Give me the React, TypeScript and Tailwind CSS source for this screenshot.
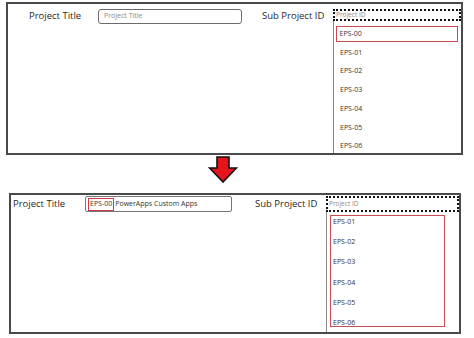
const topItems = ['EPS-00', 'EPS-01', 'EPS-02', 'EPS-03', 'EPS-04', 'EPS-05', 'EPS-06'];
const bottomItems = ['EPS-01', 'EPS-02', 'EPS-03', 'EPS-04', 'EPS-05', 'EPS-06'];

const font = { fontFamily: '"Open Sans", "Noto Sans", sans-serif' };

const Arrow = () => (
  <svg width="30" height="27" viewBox="0 0 30 27">
    <polygon
      points="9,1 21,1 21,12 28.5,12 15,26 1.5,12 9,12"
      fill="#e3141b"
      stroke="#111"
      strokeWidth="1.6"
      strokeLinejoin="miter"
    />
  </svg>
);

export default function App() {
  return (
    <div className="w-[474px] h-[338px] bg-white text-[#1f1f1f] overflow-hidden" style={font}>
      {/* before */}
      <div className="mt-[2px] ml-[6px] w-[457px] h-[153px] border-2 border-[#4a4a4a] flex items-start pl-[21px] pt-[5px]">
        <div className="w-[69px] h-[15px] flex items-center text-[9.5px]">Project Title</div>
        <div className="w-[144px] h-[15px] border border-[#6b6b6b] rounded-[3px] flex items-center pl-[5px] text-[7px] text-[#8a8a8a]">
          Project Title
        </div>
        <div className="ml-[20px] w-[71px] h-[15px] flex items-center text-[9.5px]">Sub Project ID</div>
        <div className="w-[128px] self-stretch flex flex-col">
          <div className="h-[12px] border-2 border-dotted border-[#111] flex items-center pl-[1px] text-[6.5px] leading-none text-[#8a8a8a]">
            Project ID
          </div>
          <div className="flex-1 border-l border-[#8a8a8a] pt-[4px] overflow-hidden">
            {topItems.map((item, i) =>
              i === 0 ? (
                <div key={item} className="h-[18.7px] flex items-center pl-[2px] pr-[3px]">
                  <div className="w-full h-[16px] border-[1.5px] border-[#c94a52] flex items-center pl-[2.5px] text-[7px] text-[#333]">
                    {item}
                  </div>
                </div>
              ) : (
                <div key={item} className="h-[18.7px] flex items-center pl-[6px] text-[7px] text-[#333]">
                  {item}
                </div>
              )
            )}
          </div>
        </div>
      </div>

      {/* arrow */}
      <div className="h-[38px] pl-[208px] pt-[1px]">
        <Arrow />
      </div>

      {/* after */}
      <div className="ml-[9px] w-[452px] h-[141px] border-2 border-[#4a4a4a] flex items-start pl-[2px] pt-[1px]">
        <div className="w-[72px] h-[16px] flex items-center text-[9.5px]">Project Title</div>
        <div className="w-[147px] h-[16px] border border-[#777] rounded-[2px] flex items-center pl-[2px] text-[7px] text-[#333]">
          <span className="h-[13px] px-[1px] border border-[#d03a44] flex items-center">EPS-00</span>
          <span className="ml-[1px]">PowerApps Custom Apps</span>
        </div>
        <div className="ml-[23px] w-[71px] h-[16px] flex items-center text-[9.5px]">Sub Project ID</div>
        <div className="w-[133px] self-stretch flex flex-col">
          <div className="h-[16px] border-2 border-dotted border-[#111] flex items-center pl-[1px] text-[6.5px] leading-none text-[#8a8a8a]">
            Project ID
          </div>
          <div className="flex-1 border-l border-[#8a8a8a] pl-[3px] pt-[3px]">
            <div className="w-[115px] h-[112px] border-[1.5px] border-[#c94a52] overflow-hidden pl-[2px]">
              {bottomItems.map((item) => (
                <div key={item} className="h-[20.2px] leading-[12px] text-[7px] text-[#333]">
                  {item}
                </div>
              ))}
            </div>
          </div>
        </div>
      </div>
    </div>
  );
}
